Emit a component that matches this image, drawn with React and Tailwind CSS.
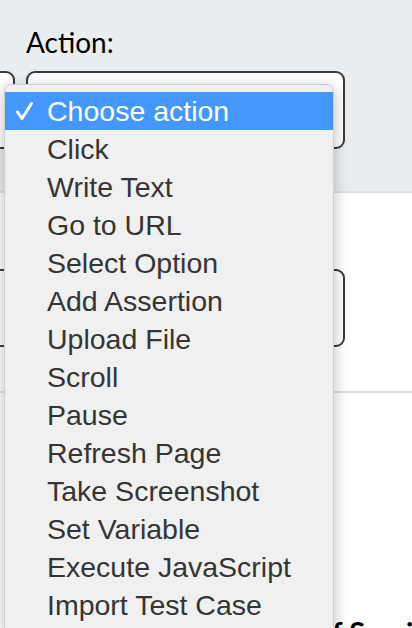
import React from "react";

const items = [
  "Click",
  "Write Text",
  "Go to URL",
  "Select Option",
  "Add Assertion",
  "Upload File",
  "Scroll",
  "Pause",
  "Refresh Page",
  "Take Screenshot",
  "Set Variable",
  "Execute JavaScript",
  "Import Test Case",
];

function SelectBox({ className = "", arrow = true }) {
  return (
    <div
      className={`relative h-[78px] rounded-[9px] border-2 border-[#3a3a3a] bg-white ${className}`}
    >
      {arrow && (
        <svg
          className="absolute right-[8px] top-[28px]"
          width="10"
          height="18"
          viewBox="0 0 10 18"
        >
          <path d="M2 6 L5 3 L8 6" stroke="#333" strokeWidth="1.6" fill="none" />
          <path d="M2 12 L5 15 L8 12" stroke="#333" strokeWidth="1.6" fill="none" />
        </svg>
      )}
    </div>
  );
}

export default function App() {
  return (
    <div className="relative h-[628px] w-[412px] overflow-hidden bg-white" style={{ fontFamily: "Lato, 'Liberation Sans', sans-serif" }}>
      <div className="h-[193px] border-b-2 border-[#dfdfdf] bg-[#ebeef1] pt-[28px]">
        <div className="flex gap-[11px] pl-[27px]">
          <div className="-ml-[120px] w-[108px]">
            <div className="h-[43px]" />
            <SelectBox className="w-[108px]" arrow={false} />
          </div>
          <div className="w-[319px]">
            <div className="h-[43px] text-[28px] leading-[28px] text-black">Action:</div>
            <SelectBox className="w-[319px]" />
          </div>
        </div>
      </div>
      <div className="h-[200px] border-b-2 border-[#dfdfdf] bg-white pt-[76px]">
        <div className="flex gap-[11px] pl-[27px]">
          <SelectBox className="-ml-[120px] w-[108px]" arrow={false} />
          <SelectBox className="w-[319px]" />
        </div>
      </div>
      <div className="h-[233px] pl-[316px] pt-[224px]">
        <div className="whitespace-nowrap text-[29px] font-bold leading-none text-black">of Session</div>
      </div>

      <div
        className="absolute left-[4px] top-[84px] w-[330px] rounded-[7px] border border-[#cfcfcf] bg-[#f0f0f0] pt-[7px] pb-[10px] shadow-[0_4px_16px_rgba(0,0,0,0.25)]"
        style={{ fontFamily: "'Liberation Sans', Arial, sans-serif" }}
      >
        <div className="flex h-[38px] items-center bg-[#4597fd] text-white">
          <span className="flex w-[42px] pl-[10px]">
            <svg width="20" height="20" viewBox="0 0 20 20">
              <path d="M2.5 11 L7 17.5 L16.5 2.5" stroke="#fff" strokeWidth="3" strokeLinecap="round" strokeLinejoin="round" fill="none" />
            </svg>
          </span>
          <span className="text-[28.5px] leading-none">Choose action</span>
        </div>
        {items.map((t) => (
          <div key={t} className="flex h-[38px] items-center pl-[42px] text-[28.5px] leading-none text-[#353535]">
            {t}
          </div>
        ))}
      </div>
    </div>
  );
}
